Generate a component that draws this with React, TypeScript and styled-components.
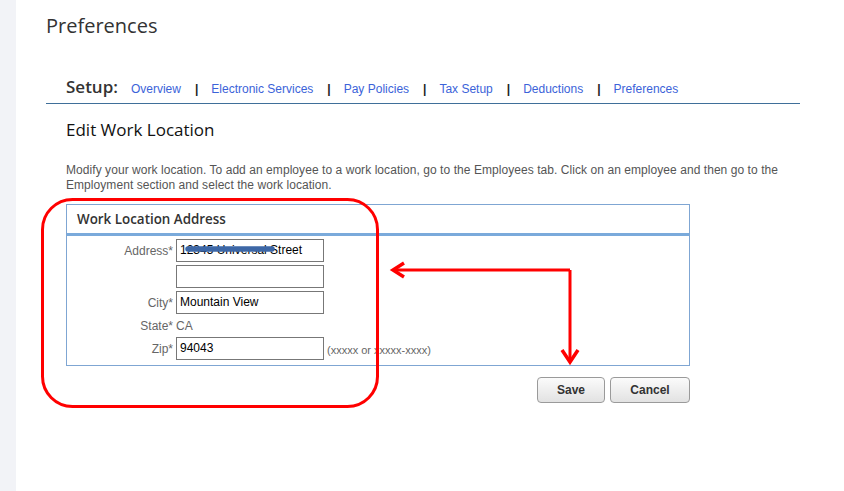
import styled, { createGlobalStyle } from "styled-components";

const GlobalStyle = createGlobalStyle`
  html, body {
    margin: 0;
    padding: 0;
    background: #ffffff;
  }
  body {
    font-family: "Liberation Sans", Arial, sans-serif;
    font-size: 12px;
    color: #555;
  }
`;

const links = [
  "Overview",
  "Electronic Services",
  "Pay Policies",
  "Tax Setup",
  "Deductions",
  "Preferences",
];

const App = () => {
  return (
    <Page>
      <GlobalStyle />
      <SideStrip />
      <Main>
        <PageTitle>Preferences</PageTitle>
        <SetupBar>
          <SetupLabel>Setup:</SetupLabel>
          {links.map((l, i) => (
            <NavGroup key={l}>
              {i > 0 && <Divider>|</Divider>}
              <NavLink>{l}</NavLink>
            </NavGroup>
          ))}
        </SetupBar>
        <Content>
          <SectionTitle>Edit Work Location</SectionTitle>
          <Intro>
            Modify your work location. To add an employee to a work location, go to the
            Employees tab. Click on an employee and then go to the Employment section and
            select the work location.
          </Intro>
          <Panel>
            <PanelHeader>Work Location Address</PanelHeader>
            <PanelBody>
              <FieldRow>
                <Label>Address*</Label>
                <Input>
                  12345 Universal Street
                  <Scribble width="90" height="8" viewBox="0 0 90 8">
                    <path d="M3 4 L87 4" stroke="#3d67a6" strokeWidth="5.5" strokeLinecap="round" />
                  </Scribble>
                </Input>
              </FieldRow>
              <FieldRow>
                <Label />
                <Input />
              </FieldRow>
              <FieldRow>
                <Label>City*</Label>
                <Input>Mountain View</Input>
              </FieldRow>
              <FieldRow $plain>
                <Label>State*</Label>
                <Value>CA</Value>
              </FieldRow>
              <FieldRow>
                <Label>Zip*</Label>
                <Input>94043</Input>
                <Hint>(xxxxx or xxxxx-xxxx)</Hint>
              </FieldRow>
            </PanelBody>
          </Panel>
          <Actions>
            <Button $w={68}>Save</Button>
            <Button $w={80}>Cancel</Button>
          </Actions>
        </Content>
      </Main>
      <Annotation viewBox="0 0 844 491" width="844" height="491">
        <rect x="42.5" y="199.5" width="335" height="207" rx="30" fill="none" stroke="#ff0000" strokeWidth="3" />
        <path d="M570 270 L394 270" stroke="#ff0000" strokeWidth="3" fill="none" />
        <path d="M404 263 L393 270 L404 277" stroke="#ff0000" strokeWidth="3.5" fill="none" strokeLinejoin="miter" />
        <path d="M570 270 L570 361" stroke="#ff0000" strokeWidth="3" fill="none" />
        <path d="M562 350 L570 362 L578 350" stroke="#ff0000" strokeWidth="3.5" fill="none" />
      </Annotation>
    </Page>
  );
};

export default App;

const Page = styled.div`
  position: relative;
  display: flex;
  width: 844px;
  height: 491px;
  overflow: hidden;
`;

const SideStrip = styled.div`
  width: 16px;
  flex-shrink: 0;
  background: #f2f3f7;
`;

const Main = styled.div`
  flex: 1;
  padding: 13px 0 0 30px;
`;

const PageTitle = styled.h1`
  margin: 0;
  font-family: "Open Sans", "DejaVu Sans", sans-serif;
  font-weight: 500;
  font-size: 20px;
  line-height: 26px;
  color: #333;
`;

const SetupBar = styled.div`
  width: 754px;
  margin-top: 36px;
  padding: 0 0 5px 20px;
  box-sizing: border-box;
  border-bottom: 1px solid #3f6f99;
  display: flex;
  align-items: baseline;
`;

const SetupLabel = styled.span`
  font-family: "Open Sans", "DejaVu Sans", sans-serif;
  font-weight: 600;
  font-size: 17px;
  color: #333;
  margin-right: 13px;
`;

const NavGroup = styled.span`
  display: inline-flex;
  align-items: baseline;
`;

const Divider = styled.span`
  color: #222;
  font-weight: bold;
  margin: 0 13px 0 14px;
`;

const NavLink = styled.a`
  color: #3b63d9;
  font-size: 12px;
  cursor: pointer;
`;

const Content = styled.div`
  padding-left: 20px;
  width: 624px;
`;

const SectionTitle = styled.h2`
  margin: 15px 0 0;
  font-family: "Open Sans", "DejaVu Sans", sans-serif;
  font-weight: 500;
  font-size: 17px;
  line-height: 22px;
  color: #111;
`;

const Intro = styled.p`
  margin: 22px 0 11px;
  width: 730px;
  line-height: 15px;
  letter-spacing: 0.06px;
  color: #555;
`;

const Panel = styled.div`
  border: 1px solid #7fa6d3;
`;

const PanelHeader = styled.div`
  height: 28px;
  line-height: 28px;
  padding-left: 10px;
  font-family: "Open Sans", "DejaVu Sans", sans-serif;
  font-weight: 600;
  font-size: 13.4px;
  color: #333;
  border-bottom: 3px solid #7aaadb;
`;

const PanelBody = styled.div`
  padding: 3px 0 5px;
  display: flex;
  flex-direction: column;
  gap: 3px;
`;

const FieldRow = styled.div<{ $plain?: boolean }>`
  display: flex;
  align-items: center;
  height: ${(p) => (p.$plain ? "17px" : "23px")};
`;

const Label = styled.span`
  width: 106px;
  text-align: right;
  padding-right: 3px;
  color: #666;
`;

const Input = styled.div`
  position: relative;
  width: 143px;
  height: 21px;
  border: 1px solid #777;
  font-size: 12px;
  line-height: 21px;
  padding-left: 3px;
  color: #000;
  background: #fff;
`;

const Scribble = styled.svg`
  position: absolute;
  left: 8px;
  top: 5px;
`;

const Value = styled.span`
  color: #666;
`;

const Hint = styled.span`
  font-size: 11px;
  color: #666;
  margin-left: 3px;
  margin-top: 3px;
`;

const Actions = styled.div`
  display: flex;
  justify-content: flex-end;
  gap: 5px;
  margin-top: 11px;
`;

const Button = styled.button<{ $w: number }>`
  width: ${(p) => p.$w}px;
  height: 26px;
  border: 1px solid #9a9a9a;
  border-radius: 4px;
  background: linear-gradient(#fbfbfb, #e2e2e2);
  font-family: "Liberation Sans", Arial, sans-serif;
  font-weight: bold;
  font-size: 12px;
  color: #333;
  cursor: pointer;
`;

const Annotation = styled.svg`
  position: absolute;
  left: 0;
  top: 0;
  pointer-events: none;
`;
